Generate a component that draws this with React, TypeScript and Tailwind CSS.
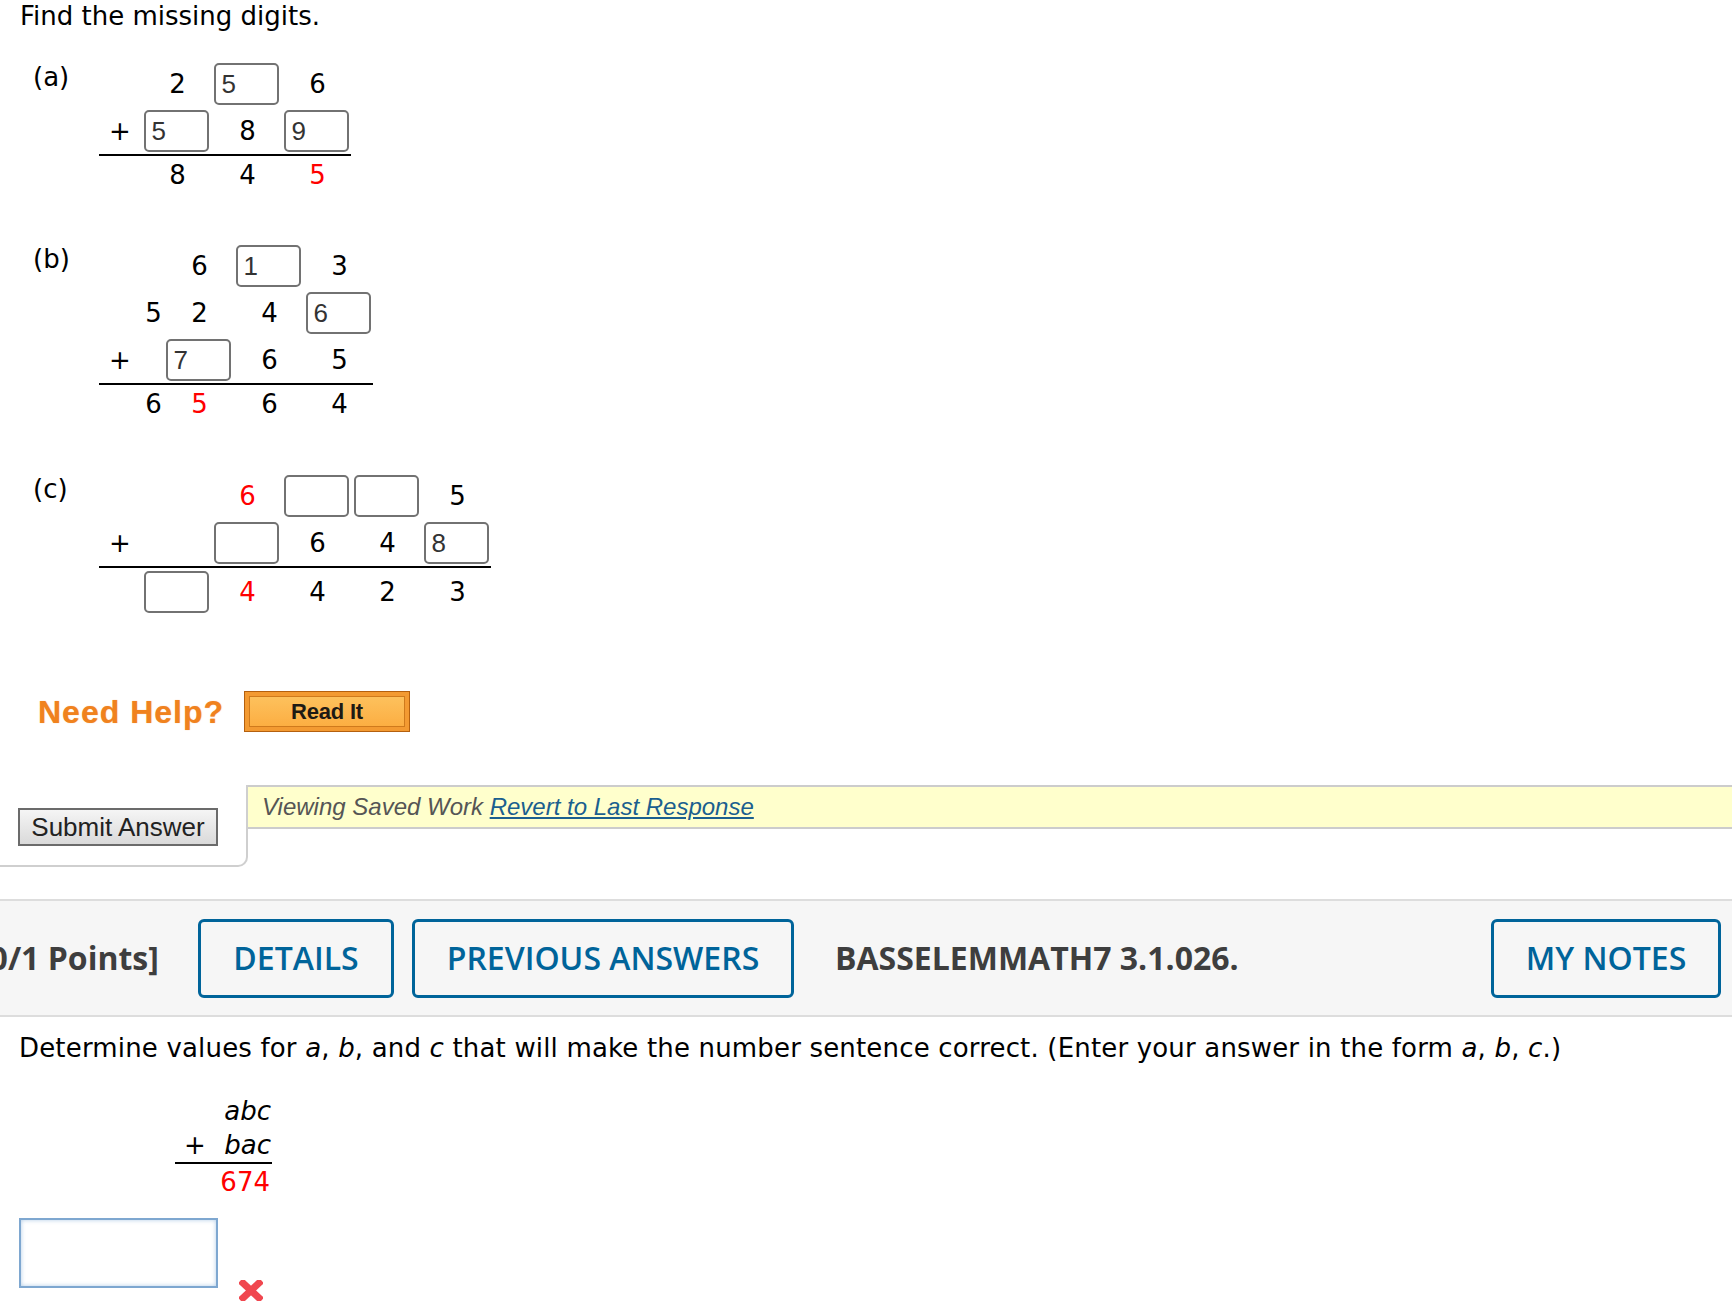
import React from "react";

// cell codes: "" empty, "+" plus sign, "#5" input box holding 5, "#" empty box, "!5" red digit, "5" digit
type Part = { label: string; cols: number[]; rows: string[][]; result: string[] };

const parts: Part[] = [
  {
    label: "(a)",
    cols: [42, 70, 70, 70],
    rows: [
      ["", "2", "#5", "6"],
      ["+", "#5", "8", "#9"],
    ],
    result: ["", "8", "4", "!5"],
  },
  {
    label: "(b)",
    cols: [42, 22, 70, 70, 70],
    rows: [
      ["", "", "6", "#1", "3"],
      ["", "5", "2", "4", "#6"],
      ["+", "", "#7", "6", "5"],
    ],
    result: ["", "6", "!5", "6", "4"],
  },
  {
    label: "(c)",
    cols: [42, 70, 70, 70, 70, 70],
    rows: [
      ["", "", "!6", "#", "#", "5"],
      ["+", "", "#", "6", "4", "#8"],
    ],
    result: ["", "#", "!4", "4", "2", "3"],
  },
];

const colW: Record<number, string> = {
  22: "w-[22px]",
  42: "w-[42px]",
  70: "w-[70px]",
};

const DigitBox = ({ v }: { v: string }) => (
  <div className="w-[65px] h-[42px] border-2 border-[#727272] rounded-[5px] bg-white flex items-center pl-[6px] text-[26px] text-[#333] font-['Liberation_Sans',Arial,sans-serif]">
    {v}
  </div>
);

const Cell = ({ code, w }: { code: string; w: number }) => {
  let content: React.ReactNode = null;
  if (code.startsWith("#")) content = <DigitBox v={code.slice(1)} />;
  else if (code.startsWith("!")) content = <span className="pl-[3px] text-[#ff0000]">{code.slice(1)}</span>;
  else if (code === "+") content = <span>+</span>;
  else if (code) content = <span className="pl-[3px]">{code}</span>;
  return <div className={`${colW[w]} shrink-0 flex items-center justify-center`}>{content}</div>;
};

const Row = ({ cells, cols }: { cells: string[]; cols: number[] }) => {
  const hasBox = cells.some((c) => c.startsWith("#"));
  return (
    <div className={`flex ${hasBox ? "h-[47px]" : "h-[38px]"}`}>
      {cells.map((c, i) => (
        <Cell key={i} code={c} w={cols[i]} />
      ))}
    </div>
  );
};

const Problem = ({ part, className }: { part: Part; className: string }) => (
  <div className={`flex pl-[33px] ${className}`}>
    <div className="w-[66px] shrink-0 pt-[2px] leading-[30px]">{part.label}</div>
    <div className="flex flex-col w-fit">
      {part.rows.map((r, i) => (
        <Row key={i} cells={r} cols={part.cols} />
      ))}
      <div className="h-[2px] bg-black" />
      <Row cells={part.result} cols={part.cols} />
    </div>
  </div>
);

const OutlineButton = ({ children, className }: { children: React.ReactNode; className: string }) => (
  <button
    className={`h-[79px] shrink-0 border-[3px] border-[#00649a] rounded-[6px] text-[32px] font-semibold text-[#00649a] bg-transparent ${className}`}
  >
    {children}
  </button>
);

export default function App() {
  return (
    <div className="h-[1304px] w-full overflow-hidden bg-white text-black text-[26px] leading-[30px] font-['DejaVu_Sans',Verdana,sans-serif]">
      {/* question 1 */}
      <div className="pl-[20px] pt-[1px]">Find the missing digits.</div>

      <Problem part={parts[0]} className="mt-[29px]" />
      <Problem part={parts[1]} className="mt-[48px]" />
      <Problem part={parts[2]} className="mt-[49px]" />

      {/* help */}
      <div className="flex items-center mt-[76px] pl-[38px]">
        <span className="text-[32px] font-bold tracking-[1px] text-[#f0821e] font-['Liberation_Sans',Arial,sans-serif] [text-shadow:0_0_1px_rgba(240,130,30,0.6)]">
          Need Help?
        </span>
        <div className="ml-[20px] w-[166px] h-[41px] border border-[#b4600f] bg-[#f39a32] p-[4px]">
          <div className="h-full border border-[#cf7a1c] bg-gradient-to-b from-[#fdc15c] to-[#fcae42] flex items-center justify-center">
            <span className="text-[22px] font-bold text-[#1e1a14] font-['Liberation_Sans',Arial,sans-serif] tracking-[-0.2px]">
              Read It
            </span>
          </div>
        </div>
      </div>

      {/* submit */}
      <div className="flex mt-[53px] font-['Liberation_Sans',Arial,sans-serif]">
        <div className="w-[248px] h-[82px] shrink-0 border-r-2 border-b-2 border-[#cfcfcf] rounded-br-[10px] pl-[18px] pt-[23px]">
          <button className="w-[200px] h-[38px] border-2 border-[#6b6b6b] bg-gradient-to-b from-[#f5f5f5] to-[#dadada] text-[26px] leading-none text-[#222]">
            Submit Answer
          </button>
        </div>
        <div className="flex-1 h-[44px] border-y-2 border-[#cccccc] bg-[#ffffcc] flex items-center pl-[14px] text-[24px] italic text-[#555]">
          Viewing Saved Work&nbsp;
          <a href="#" className="text-[#1b5f8f] underline">
            Revert to Last Response
          </a>
        </div>
      </div>

      {/* question 2 header */}
      <div className="mt-[32px] h-[118px] border-y-2 border-[#dddddd] bg-[#f6f6f6] flex items-center font-['Open_Sans',sans-serif] overflow-hidden">
        <span className="w-[219px] shrink-0 ml-[-21px] text-[32px] font-bold text-[#3e3e3e]">[0/1 Points]</span>
        <OutlineButton className="w-[196px]">DETAILS</OutlineButton>
        <OutlineButton className="w-[382px] ml-[18px]">PREVIOUS ANSWERS</OutlineButton>
        <span className="ml-[41px] text-[32px] font-bold text-[#3e3e3e]">BASSELEMMATH7 3.1.026.</span>
        <div className="flex-1" />
        <OutlineButton className="w-[230px] mr-[11px]">MY NOTES</OutlineButton>
      </div>

      {/* question 2 */}
      <div className="mt-[16px] pl-[19px] tracking-[0.17px]">
        Determine values for <i>a</i>, <i>b</i>, and <i>c</i> that will make the number sentence correct. (Enter
        your answer in the form <i>a</i>, <i>b</i>, <i>c</i>.)
      </div>

      <div className="ml-[175px] w-[97px] mt-[31px]">
        <div className="h-[34px] flex items-center justify-end pr-[1px] italic">abc</div>
        <div className="h-[34px] flex items-center justify-between pl-[9px] pr-[1px]">
          <span>+</span>
          <span className="italic">bac</span>
        </div>
        <div className="h-[2px] bg-black" />
        <div className="h-[36px] flex items-center justify-end pr-[2px] text-[#ff0000]">674</div>
      </div>

      <div className="flex items-start mt-[18px] pl-[19px]">
        <input
          type="text"
          className="w-[199px] h-[70px] border-2 border-[#7ea7d0] bg-white shadow-[inset_0_0_4px_rgba(110,160,210,0.55)] outline-none"
        />
        <svg className="ml-[19px] mt-[59px] w-[28px] h-[27px]" viewBox="0 0 28 27">
          <defs>
            <filter id="soft" x="-20%" y="-20%" width="140%" height="140%">
              <feGaussianBlur stdDeviation="0.7" />
            </filter>
          </defs>
          <g stroke="#f04650" strokeWidth="7" strokeLinecap="square" filter="url(#soft)">
            <line x1="6" y1="6" x2="22" y2="21" />
            <line x1="22" y1="6" x2="6" y2="21" />
          </g>
        </svg>
      </div>
    </div>
  );
}
